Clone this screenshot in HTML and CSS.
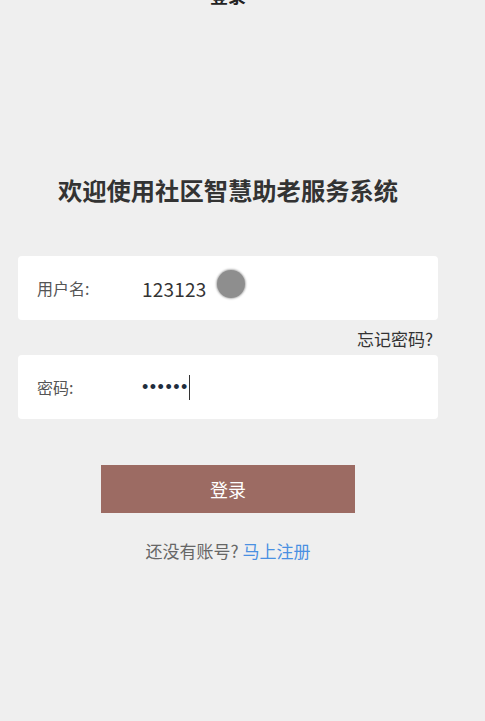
FILE: index.html
```html
<!DOCTYPE html>
<html lang="zh-CN">
<head>
    <meta charset="UTF-8">
    <meta name="viewport" content="width=device-width, initial-scale=1.0">
    <title>登录</title>
    <link rel="stylesheet" href="styles.css">
</head>
<body>
    <div class="page">
        <div class="nav-title">登录</div>

        <h1 class="welcome">欢迎使用社区智慧助老服务系统</h1>

        <div class="form">
            <div class="field">
                <span class="field-label">用户名:</span>
                <span class="field-value">123123</span>
                <span class="touch-dot"></span>
            </div>
            <div class="forget">忘记密码?</div>
            <div class="field">
                <span class="field-label">密码:</span>
                <span class="field-value password">••••••</span>
                <span class="caret"></span>
            </div>
        </div>

        <button class="login-btn">登录</button>

        <p class="register">还没有账号? <a href="#">马上注册</a></p>
    </div>
</body>
</html>
```

FILE: styles.css
```css
* {
    box-sizing: border-box;
    margin: 0;
    padding: 0;
}

body {
    font-family: "Noto Sans CJK SC", "Noto Sans", sans-serif;
    background-color: #efefef;
    color: #333;
    height: 100vh;
    overflow: hidden;
}

.page {
    width: 456px;
    display: flex;
    flex-direction: column;
    align-items: center;
}

.nav-title {
    margin-top: -17px;
    font-size: 18px;
    line-height: 24px;
    font-weight: bold;
    color: #222;
}

.welcome {
    margin-top: 167px;
    font-size: 24.3px;
    line-height: 32px;
    font-weight: bold;
    color: #333;
}

.form {
    width: 420px;
    margin-top: 50px;
    display: flex;
    flex-direction: column;
}

.field {
    height: 64px;
    background: #fff;
    border-radius: 4px;
    padding-left: 19px;
    display: flex;
    align-items: center;
}

.field-label {
    width: 105px;
    font-size: 16px;
    color: #555;
}

.field-value {
    font-size: 19px;
    color: #333;
    letter-spacing: 0.2px;
}

.field-value.password {
    font-family: "Liberation Sans", sans-serif;
    font-size: 18px;
    line-height: 25px;
    letter-spacing: 1.5px;
    color: #1f2d3d;
}

.touch-dot {
    width: 28px;
    height: 28px;
    margin-left: 11px;
    margin-bottom: 8px;
    border-radius: 50%;
    background: #8e8e8e;
    box-shadow: 0 0 2px 1px #b5b5b5;
}

.caret {
    width: 1px;
    height: 25px;
    background: #333;
}

.forget {
    align-self: flex-end;
    padding-right: 5px;
    height: 35px;
    padding-top: 8px;
    font-size: 17px;
    line-height: 22px;
    color: #333;
}

.login-btn {
    margin-top: 46px;
    width: 254px;
    height: 48px;
    border: none;
    background-color: #9c6b63;
    color: #fff;
    font-family: inherit;
    font-size: 18px;
    cursor: pointer;
}

.register {
    margin-top: 26px;
    font-size: 17px;
    line-height: 24px;
    color: #666;
}

.register a {
    color: #4a90e2;
    text-decoration: none;
}
```
